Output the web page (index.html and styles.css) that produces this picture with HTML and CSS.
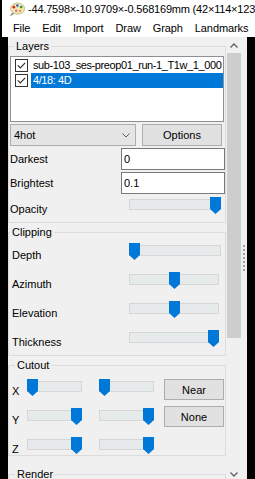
FILE: index.html
```html
<!DOCTYPE html>
<html lang="en">
<head>
    <meta charset="UTF-8">
    <meta name="viewport" content="width=device-width, initial-scale=1.0">
    <title>MRIcroGL</title>
    <link rel="stylesheet" href="styles.css">
</head>
<body>
    <div class="titlebar">
        <svg class="app-icon" viewBox="0 0 16 15">
            <path d="M3 10.5 L0.8 14.6 L5.5 11.8 Z" fill="#8c8c8c"/>
            <ellipse cx="8.6" cy="6.6" rx="7" ry="5.6" fill="#f3e7a9" stroke="#a89a68" stroke-width="0.6"/>
            <circle cx="4.8" cy="5.2" r="1.4" fill="#d8262c"/>
            <circle cx="8.4" cy="3.6" r="1.3" fill="#3563c9"/>
            <circle cx="12.2" cy="5" r="1.3" fill="#2d9a46"/>
            <circle cx="7.2" cy="8.7" r="1.3" fill="#e064c4"/>
            <circle cx="11.2" cy="8.8" r="1.1" fill="#f08a1c"/>
        </svg>
        <span class="title">-44.7598×-10.9709×-0.568169mm (42×114×123</span>
    </div>

    <div class="menubar">
        <span>File</span>
        <span>Edit</span>
        <span>Import</span>
        <span>Draw</span>
        <span>Graph</span>
        <span>Landmarks</span>
    </div>

    <div class="workspace">
        <div class="panel">
            <div class="panel-content">

                <fieldset class="group group-layers">
                    <legend>Layers</legend>
                    <div class="listbox">
                        <div class="list-item">
                            <svg class="check" viewBox="0 0 13 13"><rect x="0.5" y="0.5" width="12" height="12" fill="#fff" stroke="#333"/><path d="M2.8 6.4 L5.3 9 L10.2 3.8" fill="none" stroke="#333" stroke-width="1.2"/></svg>
                            <span class="item-text">sub-103_ses-preop01_run-1_T1w_1_000</span>
                        </div>
                        <div class="list-item selected">
                            <svg class="check" viewBox="0 0 13 13"><rect x="0.5" y="0.5" width="12" height="12" fill="#fff" stroke="#333"/><path d="M2.8 6.4 L5.3 9 L10.2 3.8" fill="none" stroke="#333" stroke-width="1.2"/></svg>
                            <span class="item-text">4/18: 4D</span>
                        </div>
                    </div>

                    <div class="combo-row">
                        <div class="combo">
                            <span>4hot</span>
                            <svg class="combo-arrow" viewBox="0 0 8 5"><path d="M0.5 0.5 L4 4 L7.5 0.5" fill="none" stroke="#606060"/></svg>
                        </div>
                        <button class="btn btn-options">Options</button>
                    </div>

                    <div class="field-row">
                        <label>Darkest</label>
                        <input type="text" value="0">
                    </div>
                    <div class="field-row">
                        <label>Brightest</label>
                        <input type="text" value="0.1">
                    </div>

                    <div class="slider-row">
                        <label>Opacity</label>
                        <div class="slider slider-wide" style="--pos: 1">
                            <span class="track"></span>
                            <svg class="thumb" viewBox="0 0 11 17"><path d="M0 0 H11 V12 L5.5 17 L0 12 Z" fill="#0078d7"/></svg>
                        </div>
                    </div>
                </fieldset>

                <fieldset class="group group-clipping">
                    <legend>Clipping</legend>
                    <div class="slider-row">
                        <label>Depth</label>
                        <div class="slider slider-wide" style="--pos: 0">
                            <span class="track"></span>
                            <svg class="thumb" viewBox="0 0 11 17"><path d="M0 0 H11 V12 L5.5 17 L0 12 Z" fill="#0078d7"/></svg>
                        </div>
                    </div>
                    <div class="slider-row">
                        <label>Azimuth</label>
                        <div class="slider" style="--pos: 0.5">
                            <span class="track"></span>
                            <svg class="thumb" viewBox="0 0 11 17"><path d="M0 0 H11 V12 L5.5 17 L0 12 Z" fill="#0078d7"/></svg>
                        </div>
                    </div>
                    <div class="slider-row">
                        <label>Elevation</label>
                        <div class="slider" style="--pos: 0.5">
                            <span class="track"></span>
                            <svg class="thumb" viewBox="0 0 11 17"><path d="M0 0 H11 V12 L5.5 17 L0 12 Z" fill="#0078d7"/></svg>
                        </div>
                    </div>
                    <div class="slider-row">
                        <label>Thickness</label>
                        <div class="slider" style="--pos: 1">
                            <span class="track"></span>
                            <svg class="thumb" viewBox="0 0 11 17"><path d="M0 0 H11 V12 L5.5 17 L0 12 Z" fill="#0078d7"/></svg>
                        </div>
                    </div>
                </fieldset>

                <fieldset class="group group-cutout">
                    <legend>Cutout</legend>
                    <div class="cutout-body">
                        <div class="cutout-rows">
                            <div class="cut-row">
                                <label>X</label>
                                <div class="slider slider-short" style="--pos: 0">
                                    <span class="track"></span>
                                    <svg class="thumb" viewBox="0 0 11 17"><path d="M0 0 H11 V12 L5.5 17 L0 12 Z" fill="#0078d7"/></svg>
                                </div>
                                <div class="slider slider-short" style="--pos: 0">
                                    <span class="track"></span>
                                    <svg class="thumb" viewBox="0 0 11 17"><path d="M0 0 H11 V12 L5.5 17 L0 12 Z" fill="#0078d7"/></svg>
                                </div>
                            </div>
                            <div class="cut-row">
                                <label>Y</label>
                                <div class="slider slider-short" style="--pos: 1">
                                    <span class="track"></span>
                                    <svg class="thumb" viewBox="0 0 11 17"><path d="M0 0 H11 V12 L5.5 17 L0 12 Z" fill="#0078d7"/></svg>
                                </div>
                                <div class="slider slider-short" style="--pos: 1">
                                    <span class="track"></span>
                                    <svg class="thumb" viewBox="0 0 11 17"><path d="M0 0 H11 V12 L5.5 17 L0 12 Z" fill="#0078d7"/></svg>
                                </div>
                            </div>
                            <div class="cut-row cut-row-last">
                                <label>Z</label>
                                <div class="slider slider-short" style="--pos: 1">
                                    <span class="track"></span>
                                    <svg class="thumb" viewBox="0 0 11 17"><path d="M0 0 H11 V12 L5.5 17 L0 12 Z" fill="#0078d7"/></svg>
                                </div>
                                <div class="slider slider-short" style="--pos: 1">
                                    <span class="track"></span>
                                    <svg class="thumb" viewBox="0 0 11 17"><path d="M0 0 H11 V12 L5.5 17 L0 12 Z" fill="#0078d7"/></svg>
                                </div>
                            </div>
                        </div>
                        <div class="cutout-buttons">
                            <button class="btn">Near</button>
                            <button class="btn">None</button>
                        </div>
                    </div>
                </fieldset>

                <fieldset class="group group-render">
                    <legend>Render</legend>
                </fieldset>

            </div>

            <div class="scrollbar">
                <div class="scroll-btn">
                    <svg viewBox="0 0 8 5"><path d="M0.5 4.5 L4 1 L7.5 4.5" fill="none" stroke="#606060" stroke-width="1.3"/></svg>
                </div>
                <div class="scroll-thumb"></div>
                <div class="scroll-track"></div>
                <div class="scroll-btn scroll-btn-down">
                    <svg viewBox="0 0 8 5"><path d="M0.5 0.5 L4 4 L7.5 0.5" fill="none" stroke="#606060" stroke-width="1.3"/></svg>
                </div>
            </div>

            <div class="splitter">
                <div class="grip"></div>
            </div>
        </div>
    </div>
</body>
</html>
```

FILE: styles.css
```css
* {
    box-sizing: border-box;
}

body {
    margin: 0;
    width: 255px;
    height: 479px;
    overflow: hidden;
    background: #000;
    font-family: "Liberation Sans", Arial, sans-serif;
    font-size: 11px;
    color: #000;
}

.titlebar {
    height: 18px;
    margin-left: 2px;
    background: #fff;
    display: flex;
    align-items: center;
    white-space: nowrap;
    overflow: hidden;
}

.app-icon {
    flex: none;
    width: 16px;
    height: 15px;
    margin-left: 7px;
}

.title {
    margin-left: 3px;
    letter-spacing: -0.2px;
}

.menubar {
    height: 19px;
    margin-left: 2px;
    padding-left: 11px;
    background: #fff;
    display: flex;
    align-items: center;
    gap: 12px;
    letter-spacing: -0.1px;
    white-space: nowrap;
    overflow: hidden;
}

.workspace {
    display: flex;
    height: 442px;
}

.panel {
    display: flex;
    margin-left: 8px;
    background: #f0f0f0;
}

.panel-content {
    width: 219px;
    padding-top: 2px;
    overflow: hidden;
}

/* group boxes */
.group {
    width: 218px;
    min-width: 0;
    margin: 0 0 2px 0;
    padding: 0 0 0 1px;
    border: 1px solid #dcdcdc;
}

.group legend {
    margin-left: 5px;
    padding: 0 2px;
    line-height: 14px;
}

.group-layers legend {
    margin-left: 4px;
}

.group-clipping legend {
    margin-left: 0;
}

.group-cutout {
    margin-bottom: 11px;
}

.group-render {
    height: 40px;
}

/* layer list */
.listbox {
    width: 214px;
    height: 66px;
    margin-top: 3px;
    padding-top: 1px;
    background: #fff;
    border: 1px solid #8c8f94;
    overflow: hidden;
}

.list-item {
    display: flex;
    align-items: center;
    height: 15px;
    white-space: nowrap;
}

.check {
    flex: none;
    width: 13px;
    height: 13px;
    margin-left: 4px;
}

.item-text {
    flex: 1;
    margin-left: 3px;
    padding-left: 2px;
    line-height: 15px;
    letter-spacing: -0.4px;
    overflow: hidden;
}

.list-item.selected .item-text {
    background: #0078d7;
    color: #fff;
}

/* colour map + options */
.combo-row {
    display: flex;
    gap: 6px;
    margin-top: 2px;
}

.combo {
    width: 126px;
    height: 22px;
    padding: 0 5px 0 3px;
    display: flex;
    align-items: center;
    justify-content: space-between;
    background: #e5e5e5;
    border: 1px solid #adadad;
}

.combo-arrow {
    width: 8px;
    height: 5px;
}

.btn {
    height: 22px;
    padding: 0;
    font: inherit;
    color: #000;
    background: #e1e1e1;
    border: 1px solid #adadad;
}

.btn-options {
    width: 80px;
}

.field-row {
    display: flex;
    align-items: center;
    height: 22px;
    margin-top: 2px;
}

.field-row label {
    width: 112px;
}

.field-row input {
    width: 104px;
    height: 22px;
    padding: 0 0 0 2px;
    font: inherit;
    color: #000;
    background: #fff;
    border: 1px solid #7a7a7a;
    outline: none;
}

/* trackbars */
.slider-row {
    display: flex;
    height: 29px;
}

.group-layers .slider-row {
    margin-top: -1px;
}

.slider-row label {
    width: 119px;
    padding: 9px 0 0 2px;
    line-height: 14px;
}

.group-layers .slider-row label {
    padding-left: 0;
}

.slider {
    position: relative;
    width: 90px;
    height: 17px;
    margin-top: 4px;
}

.slider-wide {
    width: 92px;
}

.slider-short {
    width: 55px;
}

.track {
    display: block;
    height: 11px;
    margin-top: 2px;
    background: #e7eaea;
    border: 1px solid #d6d6d6;
}

.thumb {
    position: absolute;
    top: 0;
    left: calc((100% - 11px) * var(--pos));
    width: 11px;
    height: 17px;
}

/* cutout */
.cutout-body {
    display: flex;
    margin-top: 3px;
}

.cut-row {
    display: flex;
    height: 29px;
}

.cut-row-last {
    height: 22px;
}

.cut-row label {
    width: 17px;
    padding: 9px 0 0 2px;
    line-height: 14px;
}

.cut-row .slider + .slider {
    margin-left: 17px;
}

.cutout-buttons {
    display: flex;
    flex-direction: column;
    gap: 6px;
    margin-left: 10px;
    padding-top: 4px;
}

.cutout-buttons .btn {
    width: 60px;
    height: 21px;
}

/* scrollbar + splitter */
.scrollbar {
    width: 14px;
    display: flex;
    flex-direction: column;
}

.scroll-btn {
    height: 16px;
    display: flex;
    align-items: center;
    justify-content: center;
}

.scroll-btn svg {
    width: 8px;
    height: 5px;
}

.scroll-btn-down {
    align-items: flex-end;
    padding-bottom: 2px;
}

.scroll-thumb {
    height: 285px;
    background: #cdcdcd;
}

.scroll-track {
    flex: 1;
}

.splitter {
    width: 6px;
    padding-top: 208px;
}

.grip {
    width: 2px;
    height: 28px;
    margin-left: 2px;
    background: repeating-linear-gradient(#a0a0a0 0 2px, transparent 2px 4px);
}
```
